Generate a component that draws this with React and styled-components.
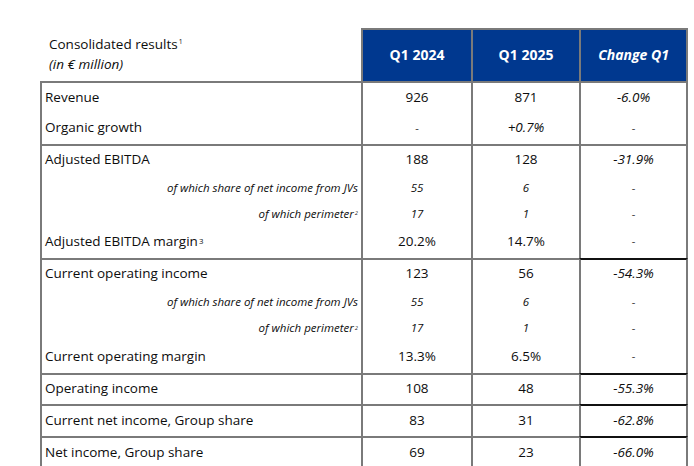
import React from 'react';
import styled, { createGlobalStyle, css } from 'styled-components';

const GlobalStyle = createGlobalStyle`
  html, body {
    margin: 0;
    padding: 0;
    background: #ffffff;
  }
  body {
    font-family: "Open Sans", "DejaVu Sans", sans-serif;
    color: #0d0d0d;
  }
`;

const GRID = '321px 110px 108px 109px';
const LINE = '#7a7a7a';

const Page = styled.div`
  padding: 28px 0 0 40px;
  width: 648px;
  height: 438px;
  overflow: hidden;
`;

const HeaderRow = styled.div`
  display: grid;
  grid-template-columns: ${GRID};
  height: 53px;
`;

const Title = styled.div`
  padding: 6px 0 0 9px;
  font-size: 13.5px;
  line-height: 20px;
`;

const TitleSub = styled.div`
  font-style: italic;
`;

const HeadCell = styled.div`
  box-sizing: border-box;
  background: #00388f;
  color: #ffffff;
  border-top: 2px solid ${LINE};
  border-left: 2px solid ${LINE};
  ${p => p.$last && css`border-right: 2px solid ${LINE};`}
  display: flex;
  align-items: center;
  justify-content: center;
  font-size: 14px;
  font-weight: 700;
  font-style: ${p => (p.$italic ? 'italic' : 'normal')};
  padding-bottom: 2px;
`;

const Row = styled.div`
  display: grid;
  grid-template-columns: ${GRID};
`;

const Cell = styled.div`
  box-sizing: border-box;
  border-left: 2px solid ${LINE};
  ${p => p.$last && css`border-right: 2px solid ${LINE};`}
  ${p => p.$top && css`border-top: 2px solid ${p.$dark ? '#111111' : LINE};`}
  display: flex;
  align-items: center;
  justify-content: ${p => (p.$left ? 'flex-start' : 'center')};
  padding: 0 0 ${p => (p.$sub ? 1 : 3)}px ${p => (p.$left ? 3 : 0)}px;
  font-size: ${p => (p.$sub ? 11.5 : 13.5)}px;
  font-style: ${p => (p.$italic ? 'italic' : 'normal')};
  white-space: nowrap;
`;

const SubLabel = styled(Cell)`
  justify-content: flex-end;
  padding-right: 3px;
  font-style: italic;
  font-size: 11.5px;
`;

const Dash = styled.span`
  font-size: 11px;
  color: #333333;
  font-style: normal;
`;

const Sup = styled.sup`
  font-size: ${p => (p.$tiny ? 0.5 : 0.58)}em;
  line-height: 0;
  vertical-align: 0.75em;
  margin-left: 1px;
`;

const rows = [
  { label: 'Revenue', a: '926', b: '871', c: '-6.0%', h: 30, top: true },
  { label: 'Organic growth', a: '-', b: '+0.7%', bItalic: true, c: '-', h: 31 },
  { label: 'Adjusted EBITDA', a: '188', b: '128', c: '-31.9%', h: 29, top: true },
  { sub: true, label: 'of which share of net income from JVs', a: '55', b: '6', c: '-', h: 26 },
  { sub: true, label: 'of which perimeter', sup: '2', a: '17', b: '1', c: '-', h: 25 },
  { label: 'Adjusted EBITDA margin', sup: '3', a: '20.2%', b: '14.7%', c: '-', h: 32 },
  { label: 'Current operating income', a: '123', b: '56', c: '-54.3%', h: 29, top: true, dark: true },
  { sub: true, label: 'of which share of net income from JVs', a: '55', b: '6', c: '-', h: 26 },
  { sub: true, label: 'of which perimeter', sup: '2', a: '17', b: '1', c: '-', h: 26 },
  { label: 'Current operating margin', a: '13.3%', b: '6.5%', c: '-', h: 32 },
  { label: 'Operating income', a: '108', b: '48', c: '-55.3%', h: 29, top: true, dark: true },
  { label: 'Current net income, Group share', a: '83', b: '31', c: '-62.8%', h: 30, top: true, dark: true },
  { label: 'Net income, Group share', a: '69', b: '23', c: '-66.0%', h: 30, top: true, dark: true },
];

const value = v => (v === '-' ? <Dash>-</Dash> : v);

export default function App() {
  return (
    <>
      <GlobalStyle />
      <Page>
        <HeaderRow>
          <Title>
            Consolidated results<Sup $tiny>1</Sup>
            <TitleSub>(in € million)</TitleSub>
          </Title>
          <HeadCell>Q1 2024</HeadCell>
          <HeadCell>Q1 2025</HeadCell>
          <HeadCell $italic $last>Change Q1</HeadCell>
        </HeaderRow>
        {rows.map((r, i) => {
          const h = r.h + (r.top ? 2 : 0);
          const LabelCell = r.sub ? SubLabel : Cell;
          return (
            <Row key={i} style={{ height: h }}>
              <LabelCell $left={!r.sub} $top={r.top} $sub={r.sub}>
                {r.label}
                {r.sup && <Sup $tiny={r.sub}>{r.sup}</Sup>}
              </LabelCell>
              <Cell $top={r.top} $sub={r.sub} $italic={r.sub}>{value(r.a)}</Cell>
              <Cell $top={r.top} $sub={r.sub} $italic={r.sub || r.bItalic}>{value(r.b)}</Cell>
              <Cell $top={r.top} $dark={r.dark} $sub={r.sub} $italic $last>{value(r.c)}</Cell>
            </Row>
          );
        })}
      </Page>
    </>
  );
}
